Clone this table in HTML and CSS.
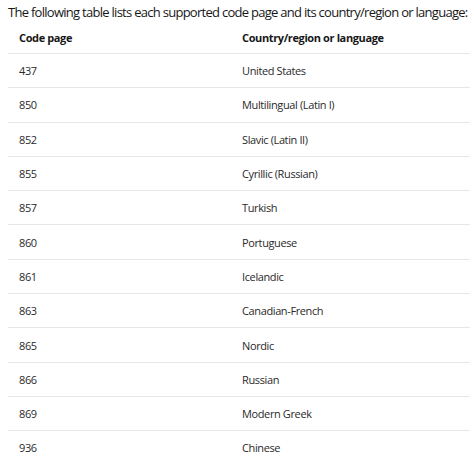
FILE: index.html
```html
<!DOCTYPE html>
<html>
<head>
<meta charset="utf-8">
<link rel="stylesheet" href="styles.css">
</head>
<body>
<p class="intro">The following table lists each supported code page and its country/region or language:</p>
<table class="cp">
<thead>
<tr><th>Code page</th><th>Country/region or language</th></tr>
</thead>
<tbody>
<tr><td>437</td><td>United States</td></tr>
<tr><td>850</td><td>Multilingual (Latin I)</td></tr>
<tr><td>852</td><td>Slavic (Latin II)</td></tr>
<tr><td>855</td><td>Cyrillic (Russian)</td></tr>
<tr><td>857</td><td>Turkish</td></tr>
<tr><td>860</td><td>Portuguese</td></tr>
<tr><td>861</td><td>Icelandic</td></tr>
<tr><td>863</td><td>Canadian-French</td></tr>
<tr><td>865</td><td>Nordic</td></tr>
<tr><td>866</td><td>Russian</td></tr>
<tr><td>869</td><td>Modern Greek</td></tr>
<tr><td>936</td><td>Chinese</td></tr>
</tbody>
</table>
</body>
</html>
```
FILE: styles.css
```css
html, body {
  margin: 0;
  padding: 0;
  background: #ffffff;
}
body {
  font-family: "Open Sans", "Noto Sans", sans-serif;
  color: #171717;
  padding: 0 0 0 8px;
}
.intro {
  margin: 0;
  font-size: 13px;
  letter-spacing: -0.72px;
  line-height: 20px;
  padding-top: 2px;
  white-space: nowrap;
}
.cp {
  border-collapse: collapse;
  width: 462px;
  margin-top: 6px;
  font-size: 11px;
  letter-spacing: -0.38px;
  color: #2a2a2a;
}
.cp th, .cp td {
  text-align: left;
  padding: 0 0 0 11px;
  height: 33.3px;
  border-bottom: 1px solid #e6e6e6;
}
.cp th {
  font-weight: 700;
  color: #171717;
  height: 23px;
  padding-top: 2px;
  vertical-align: top;
}
.cp th:first-child, .cp td:first-child {
  width: 212px;
}
.cp tr:last-child td {
  border-bottom: none;
}
```
